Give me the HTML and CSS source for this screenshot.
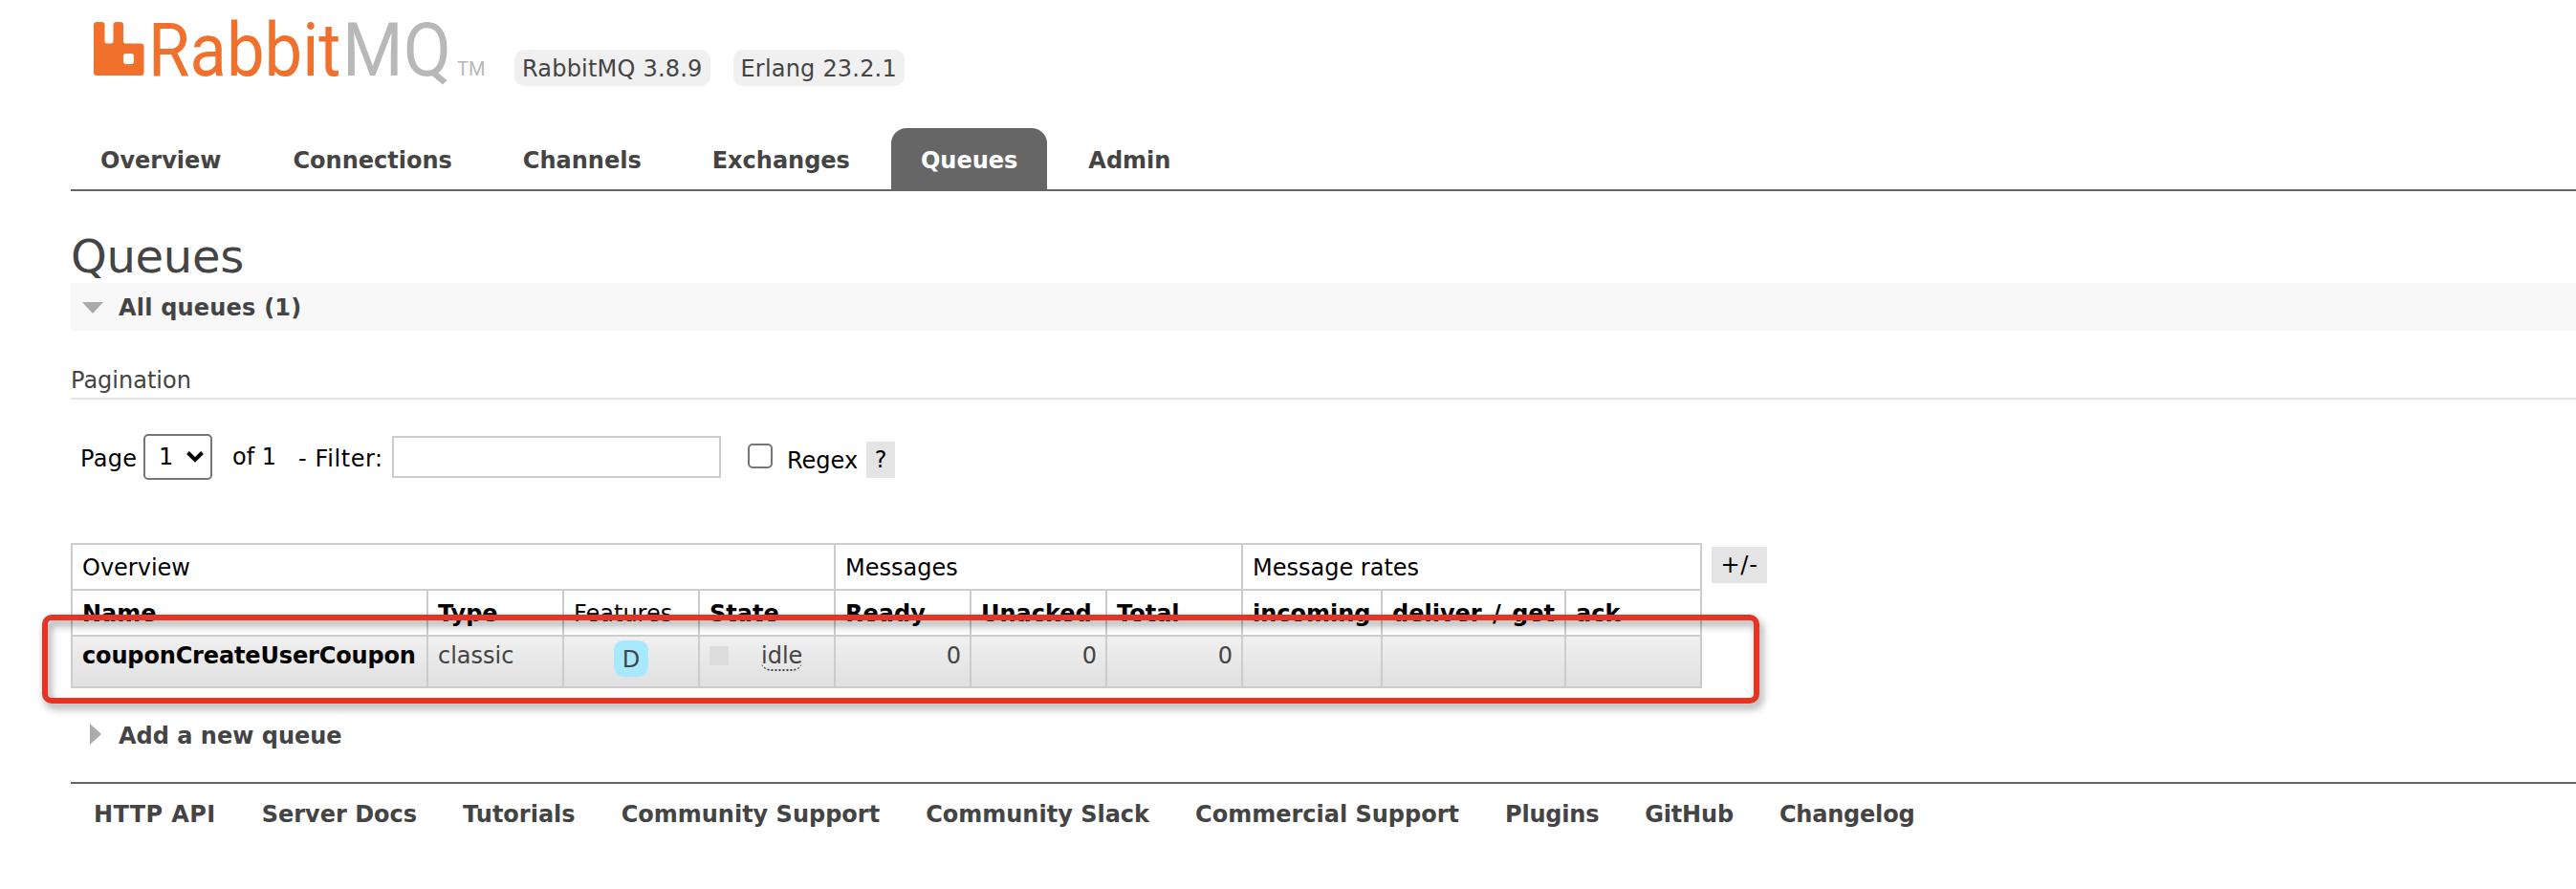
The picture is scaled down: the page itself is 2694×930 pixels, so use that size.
FILE: index.html
```html
<!DOCTYPE html>
<html lang="en">
  <head>
    <meta charset="UTF-8" />
    <title>RabbitMQ Management</title>
    <link rel="stylesheet" href="styles.css">
  </head>
  <body>
    <header class="header">
      <svg class="logo" width="410" height="64" viewBox="0 0 410 64">
        <path fill="#f0702c" fill-rule="evenodd" d="M3 0h5.500a3 3 0 0 1 3 3v17a2.500 2.500 0 0 0 2.500 2.500h4a2.500 2.500 0 0 0 2.500-2.500v-17a3 3 0 0 1 3-3h4.500a3 3 0 0 1 3 3v17a2.500 2.500 0 0 0 2.500 2.500h16a3 3 0 0 1 3 3v27.500a3 3 0 0 1-3 3h-46.500a3 3 0 0 1-3-3v-50a3 3 0 0 1 3-3zM34 33a3 3 0 0 0-3 3v5a3 3 0 0 0 3 3h5a3 3 0 0 0 3-3v-5a3 3 0 0 0-3-3z"/>
        <text class="logo-rabbit" transform="translate(57 56) scale(0.905 1)">Rabbit</text>
        <text class="logo-mq" transform="translate(260 56) scale(0.935 1)">MQ</text>
        <text class="logo-tm" transform="translate(380 56)">TM</text>
      </svg>
      <div class="versions">
        <span>RabbitMQ 3.8.9</span>
        <span>Erlang 23.2.1</span>
      </div>
    </header>

    <nav class="menu">
      <a href="#">Overview</a>
      <a href="#">Connections</a>
      <a href="#">Channels</a>
      <a href="#">Exchanges</a>
      <a href="#" class="selected">Queues</a>
      <a href="#">Admin</a>
    </nav>

    <main class="main">
      <h1>Queues</h1>

      <h2 class="section-title open">All queues (1)</h2>

      <h3>Pagination</h3>
      <!-- Paging and filter -->
      <form class="filter">
        <label class="page-label">Page</label>
        <span class="select">1
          <svg width="18" height="12" viewBox="0 0 18 12"><path d="M1.500 1.500 9 9l7.500-7.500" fill="none" stroke="#000" stroke-width="4"/></svg>
        </span>
        <span class="page-count">of 1</span>
        <label class="filter-label">- Filter:</label>
        <input type="text" class="filter-input">
        <input type="checkbox" class="filter-regex">
        <label class="regex-label">Regex</label>
        <span class="help">?</span>
      </form>

      <div class="updatable">
        <table class="list">
          <colgroup>
            <col class="w-name"><col class="w"><col class="w"><col class="w"><col class="w">
            <col class="w"><col class="w"><col class="w-incoming"><col class="w-deliver"><col class="w">
          </colgroup>
          <thead>
            <tr>
              <th colspan="4">Overview</th>
              <th colspan="3">Messages</th>
              <th colspan="3">Message rates</th>
            </tr>
            <tr>
              <th><a>Name</a></th>
              <th><a>Type</a></th>
              <th>Features</th>
              <th><a>State</a></th>
              <th><a>Ready</a></th>
              <th><a>Unacked</a></th>
              <th><a>Total</a></th>
              <th><a>incoming</a></th>
              <th><a class="rate">deliver / get</a></th>
              <th><a>ack</a></th>
            </tr>
          </thead>
          <tbody>
            <tr>
              <td><a>couponCreateUserCoupon</a></td>
              <td>classic</td>
              <td class="c"><span class="feature">D</span></td>
              <td><div class="state"><i></i><span>idle</span></div></td>
              <td class="r">0</td>
              <td class="r">0</td>
              <td class="r">0</td>
              <td></td>
              <td></td>
              <td></td>
            </tr>
          </tbody>
        </table>
        <span class="columns-toggle">+/-</span>
        <div class="highlight"></div>
      </div>

      <h2 class="section-title closed">Add a new queue</h2>
    </main>

    <footer class="footer">
      <a href="#">HTTP API</a>
      <a href="#">Server Docs</a>
      <a href="#">Tutorials</a>
      <a href="#">Community Support</a>
      <a href="#">Community Slack</a>
      <a href="#">Commercial Support</a>
      <a href="#">Plugins</a>
      <a href="#">GitHub</a>
      <a href="#">Changelog</a>
    </footer>
  </body>
</html>
```
FILE: styles.css
```css
* {
  box-sizing: border-box;
}

body {
  margin: 0;
  padding-left: 74px;
  background: #fff;
  color: #444;
  font-family: Verdana, "DejaVu Sans", sans-serif;
  font-size: 24px;
  line-height: 28px;
  overflow: hidden;
}

a {
  color: inherit;
  text-decoration: none;
  font-weight: bold;
}

.header {
  display: flex;
  height: 134px;
  padding: 23px 0 0 24px;
}

.logo {
  overflow: visible;
}

.logo text {
  font-family: Roboto, "Open Sans", sans-serif;
  font-size: 78px;
  font-weight: 400;
}

.logo .logo-rabbit {
  fill: #f0702c;
}

.logo .logo-mq {
  fill: #b8b8b8;
}

.logo .logo-tm {
  fill: #b8b8b8;
  font-size: 20px;
}

.versions {
  display: flex;
  gap: 24px;
  margin: 29px 0 0 30px;
}

.versions span {
  height: 38px;
  padding: 6px 8px 0;
  background: #f0f0f0;
  border-radius: 10px;
  letter-spacing: 0.2px;
  white-space: nowrap;
}

/* Tabs */
.menu {
  display: flex;
  gap: 12px;
  height: 66px;
  border-bottom: 2px solid #666;
}

.menu a {
  padding: 20px 31px 0;
  border-radius: 16px 16px 0 0;
}

.menu a:first-child {
  margin-right: 1px;
}

.menu .selected {
  background: #666;
  color: #fff;
}

h1 {
  margin: 0;
  height: 96px;
  padding-top: 40px;
  font-size: 48px;
  font-weight: normal;
  letter-spacing: -0.3px;
  line-height: 56px;
}

.section-title {
  display: flex;
  align-items: center;
  margin: 0;
  height: 50px;
  padding-top: 2px;
  font-size: 24px;
}

.section-title::before {
  content: "";
  border: 0 solid transparent;
}

.section-title.open {
  background: #f8f8f8;
  letter-spacing: 0.2px;
}

.section-title.open::before {
  margin: 0 16px 0 12px;
  border-width: 12px 11px 0;
  border-top-color: #aaa;
}

.section-title.closed::before {
  margin: 0 18px 4px 20px;
  border-width: 11px 0 11px 12px;
  border-left-color: #aaa;
}

h3 {
  margin: 38px 0 0;
  height: 34px;
  border-bottom: 2px solid #e4e4e4;
  font-size: 24px;
  font-weight: normal;
}

.filter {
  display: flex;
  margin: 36px 0 0 10px;
  height: 114px;
  color: #000;
}

.page-label,
.filter-label {
  padding-top: 12px;
}

.page-label {
  width: 66px;
  letter-spacing: 0.3px;
}

.select {
  display: flex;
  align-items: center;
  justify-content: space-between;
  width: 72px;
  height: 48px;
  padding: 0 7px 0 14px;
  border: 2px solid #767676;
  border-radius: 5px;
}

.page-count {
  margin-left: 21px;
  padding-top: 10px;
  width: 69px;
}

.filter-label {
  width: 98px;
  letter-spacing: 0.6px;
  white-space: nowrap;
}

.filter-input {
  margin: 2px 0 0;
  width: 344px;
  height: 44px;
  border: 2px solid #ccc;
}

.filter-regex {
  appearance: none;
  margin: 10px 15px 0 28px;
  width: 26px;
  height: 26px;
  border: 2px solid #767676;
  border-radius: 5px;
}

.regex-label {
  padding-top: 14px;
  width: 83px;
}

.help,
.columns-toggle {
  height: 38px;
  padding-top: 5px;
  background: #e4e4e4;
  color: #000;
  text-align: center;
}

.help {
  margin-top: 8px;
  width: 30px;
}

/* Queue list */
.updatable {
  position: relative;
  display: flex;
  height: 176px;
}

.list {
  table-layout: fixed;
  width: 1706px;
  height: 152px;
  border-collapse: collapse;
  color: #000;
}

.w-name {
  width: 372px;
}

.w {
  width: 142px;
}

.w-incoming {
  width: 146px;
}

.w-deliver {
  width: 192px;
}

.list th,
.list td {
  border: 2px solid #ccc;
  padding: 10px 9px 0 10px;
  text-align: left;
  vertical-align: top;
  font-weight: normal;
  white-space: nowrap;
}

.list th {
  height: 48px;
}

.list td {
  height: 54px;
  padding-top: 6px;
  color: #444;
}

.list td a {
  color: #000;
  letter-spacing: -0.15px;
}

.list .rate {
  word-spacing: 3px;
}

.list tbody tr {
  background: linear-gradient(#f0f0f0, #e0e0e0);
}

.list .c {
  padding: 4px 9px 0;
  text-align: center;
}

.list .r {
  text-align: right;
}

.feature {
  display: inline-block;
  width: 36px;
  height: 38px;
  padding-top: 6px;
  background: #a8e8fc;
  border-radius: 10px;
}

.state {
  display: flex;
}

.state i {
  width: 20px;
  height: 20px;
  margin: 4px 34px 0 0;
  background: #ddd;
}

.state span {
  height: 30px;
  border-bottom: 2px dotted #444;
  border-radius: 10px;
}

.columns-toggle {
  margin: 4px 0 0 10px;
  width: 58px;
  letter-spacing: 0.8px;
}

/* Marker drawn over the queue row */
.highlight {
  position: absolute;
  left: -30px;
  top: 75px;
  width: 1796px;
  height: 93px;
  border: 6px solid #e63424;
  border-radius: 10px;
  filter: drop-shadow(3px 5px 4px rgba(0, 0, 0, 0.4));
}

.footer {
  display: flex;
  gap: 48px;
  margin-top: 24px;
  padding: 18px 0 0 24px;
  border-top: 2px solid #666;
  white-space: nowrap;
}

.footer a:first-child {
  letter-spacing: 0.4px;
}

.footer a:nth-child(n + 7) {
  letter-spacing: -0.2px;
}
```
